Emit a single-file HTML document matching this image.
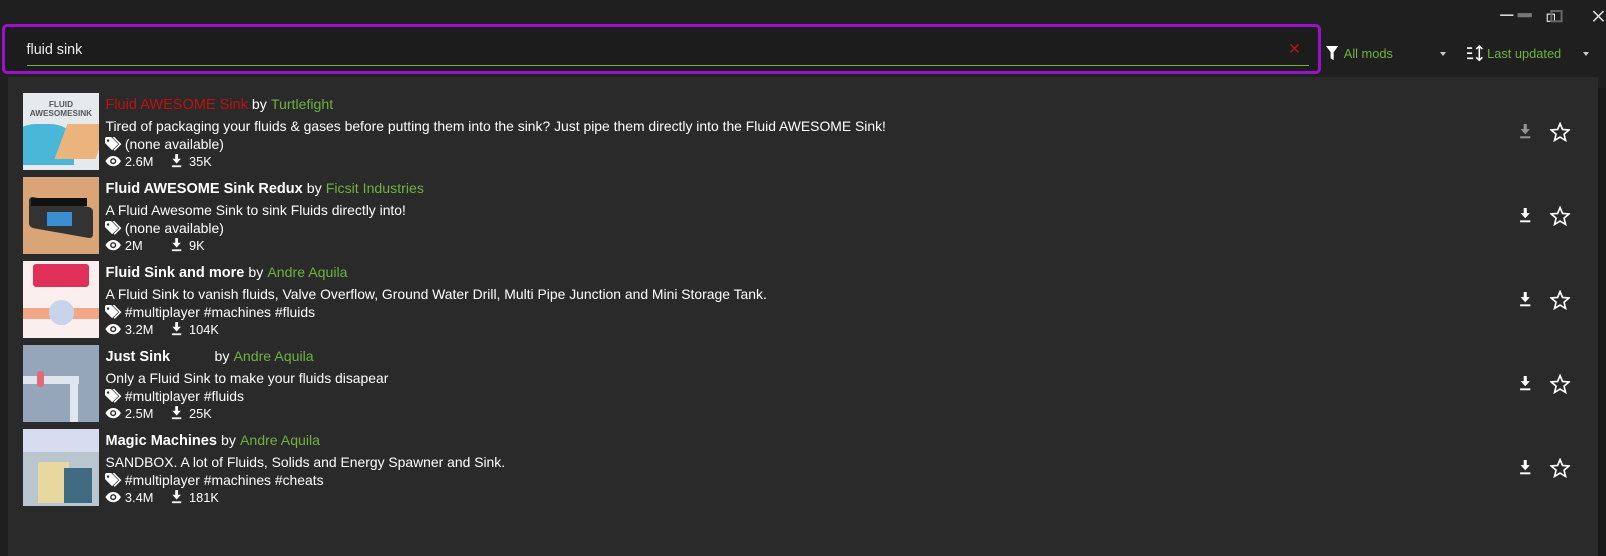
<!DOCTYPE html>
<html><head><style>
*{margin:0;padding:0;box-sizing:border-box}
body{width:1606px;height:556px;background:#1f1f1f;font-family:"Liberation Sans",Arial,sans-serif;color:#fff;overflow:hidden}
#w{position:relative;width:1568px;height:543px;zoom:1.02423}
.search{position:absolute;left:2px;top:23px;width:1288px;height:49px;border:3px solid #9a12c8;border-radius:5px;background:#1c1c1c}
.search .txt{position:absolute;left:21px;top:15px;font-size:14px;color:#eee}
.search .line{position:absolute;left:21px;right:9px;top:38px;height:1px;background:#6fb33a}
.search .x{position:absolute;right:17px;top:13px;color:#b01818;font-size:15px}
.list{position:absolute;left:8px;top:75px;width:1552px;height:468px;background:#2a2a2a}
.sb{position:absolute;left:1560px;top:86px;width:8px;height:457px;background:#1a1a1a}
.row{position:absolute;left:22px;height:75px;width:1520px}
.thumb{position:absolute;left:0;top:0;width:75px;height:75px;overflow:hidden}
.t{position:absolute;left:81px;top:3px;font-size:14.2px;font-weight:bold;white-space:nowrap}
.t span{font-weight:normal;font-size:13.8px}
.g{color:#6db33f}
.d{position:absolute;left:81px;top:24px;font-size:13.6px;white-space:nowrap}
.tg{position:absolute;left:81px;top:42px;font-size:13.6px;white-space:nowrap}
.st{position:absolute;left:81px;top:59px;font-size:12.5px;white-space:nowrap}
.st svg,.tg svg{vertical-align:-2px;margin-right:3px}
.act{position:absolute;left:1457px;top:28px}
.ctl{position:absolute;font-size:12.5px;color:#6db33f;top:45px}
</style></head><body><div id="w">
<svg style="position:absolute;left:1460px;top:8px" width="108" height="18"><line x1="5" y1="7" x2="18" y2="7" stroke="#fff" stroke-width="1.3"/><rect x="22" y="5" width="14" height="4" fill="#777"/><rect x="51" y="6" width="7" height="7" fill="none" stroke="#fff"/><rect x="55" y="3" width="10" height="10" fill="none" stroke="#666" stroke-width="2"/><path d="M96 3 L106 13 M106 3 L96 13" stroke="#ddd" stroke-width="1.5"/></svg>
<div class="search"><div class="txt">fluid sink</div><div class="line"></div><div class="x">✕</div></div>
<svg style="position:absolute;left:1295px;top:45px" width="12" height="14"><path d="M0 0H12L7.5 6V14L4.5 12V6Z" fill="#fff"/></svg>
<div class="ctl" style="left:1312px">All mods</div>
<div style="position:absolute;left:1406px;top:51px;width:0;height:0;border-left:3.5px solid transparent;border-right:3.5px solid transparent;border-top:4px solid #ccc"></div>
<svg style="position:absolute;left:1432px;top:44px" width="16" height="16"><path d="M0 3h5M0 8h5M0 13h6" stroke="#fff" stroke-width="1.5"/><path d="M12 1v14M9 4l3-3 3 3M9 12l3 3 3-3" stroke="#fff" stroke-width="1.5" fill="none"/></svg>
<div class="ctl" style="left:1452px">Last updated</div>
<div style="position:absolute;left:1546px;top:51px;width:0;height:0;border-left:3.5px solid transparent;border-right:3.5px solid transparent;border-top:4px solid #ccc"></div>
<div class="list"></div><div class="sb"></div>

<svg width="0" height="0" style="position:absolute"><defs>
<symbol id="eye" viewBox="0 0 16 12"><path d="M8 1C4 1 1.5 4 0.5 6 1.5 8 4 11 8 11s6.5-3 7.5-5C14.5 4 12 1 8 1z" fill="#fff"/><circle cx="8" cy="6" r="3" fill="#2a2a2a"/><circle cx="8" cy="6" r="1.6" fill="#fff"/></symbol>
<symbol id="dl" viewBox="0 0 12 14"><path d="M4.5 0h3v5h3L6 10 1.5 5h3z" fill="#fff"/><rect x="1" y="12" width="10" height="2" fill="#fff"/></symbol>
<symbol id="tag" viewBox="0 0 16 14"><path d="M0 1v5l7 7 6-6-7-7H1z" fill="#fff"/><circle cx="3" cy="3.5" r="1.2" fill="#2a2a2a"/><path d="M8 0l7 7-6 6" stroke="#fff" stroke-width="1.5" fill="none"/></symbol>
<symbol id="star" viewBox="0 0 20 20"><path d="M10 1.5l2.4 5.8 6.3.5-4.8 4.1 1.5 6.1L10 14.7 4.6 18l1.5-6.1-4.8-4.1 6.3-.5z" fill="none" stroke="#fff" stroke-width="1.6"/></symbol>
</defs></svg>

<div class="row" style="top:91px">
<div class="thumb" style="background:#e6eaee"><div style="position:absolute;left:-10px;top:30px;width:60px;height:40px;background:#4ab6d8;border-radius:40% 40% 0 0"></div><div style="position:absolute;left:38px;top:30px;width:40px;height:34px;background:#eab47c;transform:skewX(-20deg)"></div><div style="position:absolute;left:0;top:7px;width:75px;font-size:8px;color:#555;text-align:center;font-weight:bold">FLUID<br>AWESOMESINK</div></div>
<div class="t" style="color:#c01010;font-weight:normal">Fluid AWESOME Sink <span style="color:#fff">by</span> <span class="g">Turtlefight</span></div>
<div class="d">Tired of packaging your fluids &amp; gases before putting them into the sink? Just pipe them directly into the Fluid AWESOME Sink!</div>
<div class="tg"><svg width="16" height="14"><use href="#tag"/></svg>(none available)</div>
<div class="st"><svg width="16" height="12"><use href="#eye"/></svg>2.6M &nbsp;&nbsp;&nbsp;&nbsp;<svg width="11" height="13"><use href="#dl"/></svg> 35K</div>
<svg class="act" width="80" height="20"><use href="#dl" x="4" y="2" width="12" height="14" style="opacity:.5"/><use href="#star" x="34" y="0" width="20" height="20"/></svg>
</div>

<div class="row" style="top:173px">
<div class="thumb" style="background:#d9a577"><div style="position:absolute;left:6px;top:24px;width:62px;height:30px;background:#333;transform:skewY(10deg);border-radius:4px"></div><div style="position:absolute;left:24px;top:34px;width:24px;height:14px;background:#3a8fd0"></div><div style="position:absolute;left:8px;top:20px;width:55px;height:8px;background:#111"></div></div>
<div class="t">Fluid AWESOME Sink Redux <span>by</span> <span class="g">Ficsit Industries</span></div>
<div class="d">A Fluid Awesome Sink to sink Fluids directly into!</div>
<div class="tg"><svg width="16" height="14"><use href="#tag"/></svg>(none available)</div>
<div class="st"><svg width="16" height="12"><use href="#eye"/></svg>2M &nbsp;&nbsp;&nbsp;&nbsp;&nbsp;&nbsp;&nbsp;<svg width="11" height="13"><use href="#dl"/></svg> 9K</div>
<svg class="act" width="80" height="20"><use href="#dl" x="4" y="2" width="12" height="14"/><use href="#star" x="34" y="0" width="20" height="20"/></svg>
</div>

<div class="row" style="top:255px">
<div class="thumb" style="background:#fbeeee"><div style="position:absolute;left:10px;top:3px;width:55px;height:22px;background:#e0305a;border-radius:3px"></div><div style="position:absolute;left:0;top:46px;width:75px;height:10px;background:#f2a888"></div><div style="position:absolute;left:26px;top:38px;width:24px;height:24px;border-radius:50%;background:#c8d4ea"></div></div>
<div class="t">Fluid Sink and more <span>by</span> <span class="g">Andre Aquila</span></div>
<div class="d">A Fluid Sink to vanish fluids, Valve Overflow, Ground Water Drill, Multi Pipe Junction and Mini Storage Tank.</div>
<div class="tg"><svg width="16" height="14"><use href="#tag"/></svg>#multiplayer #machines #fluids</div>
<div class="st"><svg width="16" height="12"><use href="#eye"/></svg>3.2M &nbsp;&nbsp;&nbsp;&nbsp;<svg width="11" height="13"><use href="#dl"/></svg> 104K</div>
<svg class="act" width="80" height="20"><use href="#dl" x="4" y="2" width="12" height="14"/><use href="#star" x="34" y="0" width="20" height="20"/></svg>
</div>

<div class="row" style="top:337px">
<div class="thumb" style="background:#95a6ba"><div style="position:absolute;left:0;top:30px;width:55px;height:8px;background:#dfe6ee"></div><div style="position:absolute;left:46px;top:30px;width:8px;height:45px;background:#dfe6ee"></div><div style="position:absolute;left:14px;top:25px;width:7px;height:16px;background:#e06a7a;border-radius:3px"></div></div>
<div class="t">Just Sink &nbsp;&nbsp;&nbsp;&nbsp;&nbsp;&nbsp;&nbsp;&nbsp;&nbsp;&nbsp;<span>by</span> <span class="g">Andre Aquila</span></div>
<div class="d">Only a Fluid Sink to make your fluids disapear</div>
<div class="tg"><svg width="16" height="14"><use href="#tag"/></svg>#multiplayer #fluids</div>
<div class="st"><svg width="16" height="12"><use href="#eye"/></svg>2.5M &nbsp;&nbsp;&nbsp;&nbsp;<svg width="11" height="13"><use href="#dl"/></svg> 25K</div>
<svg class="act" width="80" height="20"><use href="#dl" x="4" y="2" width="12" height="14"/><use href="#star" x="34" y="0" width="20" height="20"/></svg>
</div>

<div class="row" style="top:419px">
<div class="thumb" style="background:linear-gradient(#d8dcf0 30%,#b9c6cf 30%)"><div style="position:absolute;left:15px;top:32px;width:30px;height:40px;background:#e8d8a0"></div><div style="position:absolute;left:40px;top:38px;width:28px;height:34px;background:#3f6a80"></div></div>
<div class="t">Magic Machines <span>by</span> <span class="g">Andre Aquila</span></div>
<div class="d">SANDBOX. A lot of Fluids, Solids and Energy Spawner and Sink.</div>
<div class="tg"><svg width="16" height="14"><use href="#tag"/></svg>#multiplayer #machines #cheats</div>
<div class="st"><svg width="16" height="12"><use href="#eye"/></svg>3.4M &nbsp;&nbsp;&nbsp;&nbsp;<svg width="11" height="13"><use href="#dl"/></svg> 181K</div>
<svg class="act" width="80" height="20"><use href="#dl" x="4" y="2" width="12" height="14"/><use href="#star" x="34" y="0" width="20" height="20"/></svg>
</div>
</div></body></html>
